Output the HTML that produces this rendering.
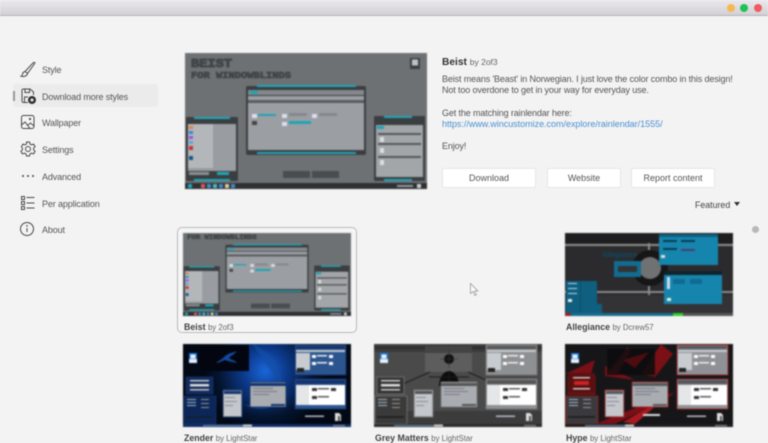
<!DOCTYPE html>
<html><head><meta charset="utf-8">
<style>
html,body{margin:0;padding:0;width:768px;height:443px;overflow:hidden;background:#f3f3f3}
#p{position:relative;width:768px;height:443px;overflow:hidden;background:#f3f3f3;font-family:"Liberation Sans",sans-serif;color:#444;filter:blur(.4px)}
.a{position:absolute;white-space:nowrap}
.nav{position:absolute;left:42px;font-size:9px;line-height:12px;color:#555;letter-spacing:-.13px;white-space:nowrap}
.ic{position:absolute;left:19px;width:18px;height:18px;fill:none;stroke:#4a4a4a;stroke-width:1}
.btn{position:absolute;top:168px;height:18px;background:#fff;border:1px solid #e6e6e6;border-radius:2px;text-align:center;font-size:9px;line-height:19px;color:#555}
.th{position:absolute;width:168px;height:83px;display:block;filter:blur(.55px)}
.lb{position:absolute;font-size:8.8px;line-height:12px;font-weight:bold;color:#444;white-space:nowrap}
.lb span{font-weight:normal;font-size:7.8px;color:#666}
</style></head><body><div id="p">
<svg width="0" height="0" style="position:absolute">
<defs>
<radialGradient id="zr" gradientUnits="userSpaceOnUse" cx="82" cy="27" r="62"><stop offset="0" stop-color="#1a66d8"/><stop offset=".35" stop-color="#0c3a8c"/><stop offset=".75" stop-color="#04142f"/><stop offset="1" stop-color="#020814"/></radialGradient>
</defs>
<symbol id="beist" viewBox="0 0 242 136">
<rect width="242" height="136" fill="#6e7174"/>
<text x="6" y="14" font-family="Liberation Mono" font-weight="bold" font-size="12" fill="#424547" stroke="#424547" stroke-width="1" textLength="41" lengthAdjust="spacingAndGlyphs">BEIST</text>
<text x="6" y="25" font-family="Liberation Mono" font-weight="bold" font-size="9" fill="#424547" stroke="#424547" stroke-width=".7" textLength="100" lengthAdjust="spacingAndGlyphs">FOR WINDOWBLINDS</text>
<rect x="225" y="5" width="10" height="11" fill="#3d4043"/><rect x="227" y="6.5" width="6" height="6" fill="#bfc2c5"/>
<rect x="61" y="33" width="120" height="69" rx="2" fill="#3b3e41"/>
<rect x="72" y="32" width="99" height="2" fill="#1fa5b5"/><rect x="72" y="99" width="99" height="2" fill="#1fa5b5"/>
<rect x="63" y="43" width="116" height="54" fill="#9b9fa3"/>
<rect x="63" y="37" width="116" height="5" fill="#85898d"/><rect x="63" y="47" width="116" height="3" fill="#5a5d60"/>
<rect x="65" y="38" width="8" height="3" fill="#1fa5b5"/>
<rect x="67" y="61" width="5" height="4" fill="#dde"/><rect x="73" y="61" width="18" height="2" fill="#1fa5b5"/><rect x="97" y="61" width="5" height="4" fill="#dde"/><rect x="104" y="60" width="18" height="3" fill="#85898d"/><rect x="127" y="61" width="5" height="4" fill="#dde"/><rect x="134" y="60" width="18" height="3" fill="#85898d"/>
<rect x="67" y="68" width="5" height="4" fill="#444"/><rect x="97" y="69" width="5" height="4" fill="#dde"/><rect x="104" y="68" width="22" height="3" fill="#1fa5b5"/>
<rect x="1" y="64" width="52" height="64" rx="1" fill="#3b3e41"/>
<rect x="9" y="64" width="36" height="2" fill="#1fa5b5"/><rect x="9" y="126" width="36" height="2" fill="#1fa5b5"/>
<rect x="3" y="71" width="25" height="44" fill="#b4b7ba"/><rect x="28" y="71" width="23" height="47" fill="#999da1"/><rect x="3" y="115" width="25" height="3" fill="#999da1"/>
<rect x="4" y="73" width="4" height="3" fill="#d84"/><rect x="4" y="78" width="4" height="3" fill="#38d"/><rect x="4" y="83" width="4" height="3" fill="#95d"/><rect x="4" y="88" width="4" height="3" fill="#5ad"/><rect x="4" y="93" width="4" height="4" fill="#c33"/><rect x="4" y="103" width="4" height="4" fill="#158"/>
<rect x="4" y="119" width="20" height="3" fill="#8c9094"/><rect x="32" y="119" width="12" height="3" fill="#1fa5b5"/>
<rect x="189" y="63" width="51" height="65" rx="1" fill="#3b3e41"/>
<rect x="199" y="63" width="28" height="2" fill="#1fa5b5"/><rect x="199" y="126" width="28" height="2" fill="#1fa5b5"/>
<rect x="191" y="72" width="47" height="52" fill="#a2a6a9"/><rect x="192" y="73" width="7" height="3" fill="#1fa5b5"/>
<rect x="193" y="80" width="43" height="2" fill="#55585b"/><rect x="193" y="90" width="43" height="2" fill="#55585b"/><rect x="193" y="103" width="43" height="2" fill="#55585b"/>
<rect x="195" y="84" width="4" height="5" fill="#ddd"/><rect x="195" y="95" width="4" height="5" fill="#ddd"/><rect x="195" y="107" width="4" height="5" fill="#ddd"/>
<rect x="98" y="118" width="27" height="7" fill="#4a4d4f"/><rect x="127" y="118" width="27" height="7" fill="#4a4d4f"/>
<rect y="130" width="242" height="6" fill="#2e3133"/>
<rect x="3" y="131" width="4" height="4" fill="#1fa5b5"/><rect x="16" y="131" width="4" height="4" fill="#d55"/><rect x="22" y="131" width="4" height="4" fill="#48c"/><rect x="28" y="131" width="4" height="4" fill="#4bb"/><rect x="34" y="131" width="4" height="4" fill="#48c"/><rect x="40" y="131" width="4" height="4" fill="#dc9"/><rect x="46" y="131" width="4" height="4" fill="#48c"/>
<rect x="212" y="132" width="16" height="2" fill="#99a"/><rect x="232" y="131" width="4" height="4" fill="#ccc"/>
</symbol>
<symbol id="ls" viewBox="0 0 168 83">
<rect x="1" y="52" width="32" height="28" fill="var(--sm)" stroke="var(--bd)" stroke-width=".8"/>
<rect x="3" y="72" width="27" height="2" fill="var(--ln)"/><rect x="4" y="55" width="9" height="1" fill="#abc"/><rect x="4" y="58" width="9" height="1" fill="#abc"/><rect x="4" y="61" width="9" height="1" fill="#abc"/>
<rect x="18" y="55" width="8" height="1" fill="#999"/><rect x="18" y="59" width="8" height="1" fill="#999"/><rect x="18" y="63" width="8" height="1" fill="#999"/>
<rect x="6" y="9" width="8" height="10" fill="#1a78d8"/><rect x="6" y="15" width="8" height="4" fill="#e8f0fa"/><rect x="7.5" y="10.5" width="5" height="4" fill="#e8f0fa"/>
<rect x="3" y="33" width="27" height="17" fill="var(--pn)" stroke="var(--bd)" stroke-width=".8"/>
<rect x="7" y="36" width="19" height="1.5" fill="#ccc"/><rect x="7" y="40" width="19" height="2.5" fill="#ddd"/><rect x="7" y="45" width="19" height="1.5" fill="#ccc"/>
<rect x="40" y="46" width="19" height="27" fill="#a8adb3" stroke="var(--bd)" stroke-width=".8"/><rect x="41" y="47" width="17" height="3" fill="var(--tt)"/><rect x="41" y="50" width="17" height="22" fill="#c4c7cb"/><rect x="42" y="53" width="10" height="1" fill="#889"/><rect x="42" y="57" width="12" height="1" fill="#889"/><rect x="42" y="61" width="8" height="1" fill="#889"/>
<rect x="67" y="38" width="36" height="25" fill="#a9adb1" stroke="var(--bd)" stroke-width=".8"/><rect x="67" y="39" width="36" height="3" fill="var(--tt)"/><rect x="70" y="44" width="20" height="1" fill="#778"/><rect x="70" y="47" width="24" height="1" fill="#778"/><rect x="70" y="50" width="16" height="1" fill="#778"/><rect x="88" y="60" width="14" height="2" fill="var(--tt)"/>
<rect x="112" y="1" width="51" height="30" fill="var(--w1)" stroke="var(--bd)" stroke-width=".8"/><rect x="113" y="2" width="49" height="3" fill="var(--tt)"/><rect x="113" y="6" width="49" height="2" fill="#c4c8cc"/>
<rect x="113" y="9" width="14" height="17" fill="#c8ccd0"/><rect x="129" y="11" width="4" height="3" fill="#fff"/><rect x="134" y="11" width="10" height="1.5" fill="#eee"/><rect x="146" y="11" width="4" height="3" fill="#fff"/><rect x="129" y="18" width="4" height="3" fill="#fff"/><rect x="134" y="18" width="10" height="1.5" fill="#eee"/><rect x="146" y="18" width="4" height="3" fill="#fff"/>
<rect x="114" y="24" width="7" height="4" fill="#222"/>
<rect x="112" y="35" width="51" height="30" fill="var(--w1)" stroke="var(--bd)" stroke-width=".8"/><rect x="113" y="36" width="49" height="4" fill="var(--tt)"/>
<rect x="113" y="41" width="49" height="20" fill="#fff"/><rect x="113" y="41" width="13" height="20" fill="#e4e6e8"/><rect x="129" y="44" width="5" height="3" fill="#333"/><rect x="135" y="44" width="11" height="1.5" fill="#555"/><rect x="148" y="44" width="5" height="3" fill="#333"/><rect x="129" y="52" width="5" height="3" fill="#333"/><rect x="135" y="52" width="11" height="1.5" fill="#555"/>
<rect x="122" y="71.5" width="19" height="1.5" fill="#bbc"/>
<path d="M152 69h4l2 2v6h-6z" fill="#ddd"/><rect x="155" y="72" width="2" height="5" fill="#555"/>
<rect y="80" width="168" height="3" fill="var(--tb)"/><rect x="20" y="81" width="40" height="1.2" fill="#68a"/><rect x="60" y="80.5" width="9" height="2" fill="#ccc"/><rect x="150" y="81" width="12" height="1.2" fill="#889"/>
</symbol>
</svg>

<div class="a" style="left:0;top:0;width:768px;height:15px;background:linear-gradient(#ebe9ec,#d2d0d5);border-bottom:1px solid #b5b3ba"></div>
<div class="a" style="left:727px;top:4px;width:8px;height:8px;border-radius:50%;background:#f6b94f"></div>
<div class="a" style="left:740px;top:4px;width:8px;height:8px;border-radius:50%;background:#1cc452"></div>
<div class="a" style="left:754px;top:4px;width:8px;height:8px;border-radius:50%;background:#ef5b60"></div>

<div class="a" style="left:13px;top:84px;width:145px;height:23px;background:#ebebeb;border-radius:3px"></div>
<div class="a" style="left:13px;top:91px;width:2px;height:10px;background:#999"></div>

<svg class="ic" style="top:60px" viewBox="0 0 18 18"><path d="M6 11.500 14.500 2.500c.8-.7 1.800.2 1.200 1L8.500 13.500zM6 11.500c-2 .5-2.500 2-2.500 3.200-.2 1-.8 1.300-1.500 1.500 2 .8 6 .3 6.500-2.700"/></svg>
<div class="nav" style="top:63.500px">Style</div>
<svg class="ic" style="top:87px" viewBox="0 0 18 18"><path d="M9 15.500H4.500a1.500 1.500 0 0 1-1.500-1.500V3.500A1.500 1.500 0 0 1 4.500 2h6.500l3.500 3v3M6 2v3.500h4.500V2M5.500 15v-5H9"/><circle cx="13" cy="13" r="4" fill="#333" stroke="none"/><circle cx="13" cy="13" r="1.500" fill="#eee" stroke="none"/></svg>
<div class="nav" style="top:90.500px">Download more styles</div>
<svg class="ic" style="top:113px" viewBox="0 0 18 18"><rect x="2.500" y="2.500" width="12.500" height="13" rx="2"/><path d="M2.500 12 6 9l5 6.500M9 12l2.500-2 3.500 3"/><circle cx="11" cy="6" r="1.100" fill="#444" stroke="none"/></svg>
<div class="nav" style="top:116.500px">Wallpaper</div>
<svg class="ic" style="top:140px" viewBox="0 0 18 18"><path d="M7.500 2h3l.5 2 1.600.8 2-.7 1.500 2.600-1.500 1.400v1.800l1.500 1.400-1.500 2.600-2-.7-1.600.8-.5 2h-3l-.5-2-1.600-.8-2 .7-1.500-2.600 1.500-1.400V8.100L2.400 6.700l1.500-2.600 2 .7L7.500 4z"/><circle cx="9" cy="9" r="2.500"/></svg>
<div class="nav" style="top:143.500px">Settings</div>
<svg class="ic" style="top:167px" viewBox="0 0 18 18"><circle cx="4" cy="9" r="1" fill="#444" stroke="none"/><circle cx="9" cy="9" r="1" fill="#444" stroke="none"/><circle cx="14" cy="9" r="1" fill="#444" stroke="none"/></svg>
<div class="nav" style="top:170.500px">Advanced</div>
<svg class="ic" style="top:194px" viewBox="0 0 18 18"><rect x="2.500" y="2.500" width="3" height="3"/><rect x="2.500" y="7.500" width="3" height="3"/><rect x="2.500" y="12.500" width="3" height="3"/><path d="M7.500 3.500h8M7.500 9h8M7.500 14h8"/></svg>
<div class="nav" style="top:197.500px">Per application</div>
<svg class="ic" style="top:220px" viewBox="0 0 18 18"><circle cx="8" cy="9" r="6.500"/><path d="M8 8v4"/><circle cx="8" cy="5.800" r=".8" fill="#444" stroke="none"/></svg>
<div class="nav" style="top:223.500px">About</div>

<svg class="a" style="left:185px;top:53px;filter:blur(.55px)" width="242" height="136"><use href="#beist" width="242" height="136"/></svg>

<div class="a" style="left:442px;top:56px;font-size:10.200px;line-height:13px;font-weight:bold;color:#333">Beist <span style="font-weight:normal;font-size:8.500px;color:#666">by 2of3</span></div>
<div class="a" style="left:442px;top:74px;font-size:9px;line-height:11.200px;color:#555;letter-spacing:-.13px">Beist means 'Beast' in Norwegian. I just love the color combo in this design!<br>Not too overdone to get in your way for everyday use.<br><br>Get the matching rainlendar here:<br><span style="color:#4a90d0;letter-spacing:-.02px">https://www.wincustomize.com/explore/rainlendar/1555/</span><br><br>Enjoy!</div>

<div class="btn" style="left:442px;width:92px">Download</div>
<div class="btn" style="left:547px;width:72px">Website</div>
<div class="btn" style="left:631px;width:82px">Report content</div>

<div class="a" style="left:695px;top:199px;font-size:8.800px;line-height:12px;color:#444">Featured</div>
<div class="a" style="left:734px;top:202px;width:0;height:0;border-left:3.500px solid transparent;border-right:3.500px solid transparent;border-top:4px solid #333"></div>
<div class="a" style="left:752px;top:226px;width:7px;height:7px;border-radius:50%;background:#b8b8b8"></div>

<div class="a" style="left:177px;top:227px;width:178px;height:104px;border:1.500px solid #bbb;border-radius:5px;background:#f5f5f5"></div>
<svg class="th" style="left:183px;top:233px" viewBox="0 0 242 120" preserveAspectRatio="none"><svg x="0" y="-16" width="242" height="136" viewBox="0 0 242 136"><use href="#beist" width="242" height="136"/></svg></svg>
<div class="lb" style="left:184px;top:321px">Beist <span>by 2of3</span></div>

<svg class="th" style="left:565px;top:233px" viewBox="0 0 168 83">
<rect width="168" height="83" fill="#2b2b2d"/><rect y="0" width="168" height="10" fill="#1e1e20"/>
<rect y="11" width="168" height="2" fill="#8a8a8a"/><rect y="58" width="168" height="2" fill="#8a8a8a"/><rect y="62" width="168" height="18" fill="#333336"/>
<rect x="83" y="10" width="2" height="52" fill="#8a8a8a"/>
<circle cx="85" cy="35" r="18" fill="#161616"/><circle cx="85" cy="35" r="11" fill="#6f7173"/>
<text x="37" y="24" font-family="Liberation Sans" font-weight="bold" font-size="7" fill="#0d4a66">Allegiance</text>
<rect x="49" y="28" width="27" height="16" fill="#126c92"/><rect x="53" y="33" width="19" height="6" fill="#333"/>
<rect x="94" y="1" width="59" height="31" fill="#1685ad"/><rect x="94" y="1" width="59" height="3" fill="#0e5f80"/><rect x="98" y="7" width="14" height="2" fill="#0a3b52"/><rect x="116" y="7" width="14" height="2" fill="#0a3b52"/><rect x="98" y="15" width="14" height="2" fill="#0a3b52"/><rect x="116" y="16" width="14" height="2" fill="#4a3b72"/><rect x="96" y="22" width="4" height="3" fill="#ddd"/>
<rect x="99" y="38" width="58" height="33" fill="#1685ad"/><rect x="99" y="38" width="58" height="4" fill="#10242e"/><rect x="102" y="44" width="3" height="12" fill="#cde"/><rect x="108" y="46" width="12" height="5" fill="#0f6c90"/><rect x="125" y="46" width="12" height="5" fill="#0f6c90"/><rect x="102" y="65" width="4" height="3" fill="#eed"/>
<rect x="1" y="48" width="31" height="32" fill="#0f5f80"/><rect x="15" y="48" width="1" height="32" fill="#0b506d"/><rect x="3" y="50" width="9" height="1" fill="#bde"/><rect x="3" y="55" width="9" height="1" fill="#bde"/><rect x="3" y="60" width="9" height="1" fill="#bde"/><rect x="3" y="66" width="4" height="3" fill="#eed"/>
<rect x="28" y="71" width="9" height="9" fill="#0f5f80"/>
<rect y="80" width="168" height="3" fill="#166c8e"/><rect x="0" y="80" width="6" height="3" fill="#922"/><rect x="108" y="80" width="10" height="3" fill="#3c3"/><rect x="118" y="80" width="50" height="3" fill="#555"/>
</svg>
<div class="lb" style="left:566px;top:321px">Allegiance <span>by Dcrew57</span></div>

<svg class="th" style="left:183px;top:344px;--sm:#0c2658;--bd:#143268;--ln:#123;--pn:#122b5e;--tt:#16346f;--w1:#2c558f;--tb:#0e2d63" viewBox="0 0 168 83">
<rect width="168" height="83" fill="url(#zr)"/>
<rect x="18" y="1" width="48" height="26" fill="#030610"/>
<path d="M40 14c6-6 10-5 14-7-3 4-7 5-8 7 2 2 6 2 8 5-5-1-9-2-12-3-3 1-6 3-9 3 2-2 5-3 7-5z" fill="#124a9e"/>
<path d="M70 0c20 10 30 22 28 40C90 28 80 18 70 0zM60 60c15 4 30 0 45-10-8 14-28 20-45 10z" fill="#144fa8" opacity=".6"/>
<use href="#ls" width="168" height="83"/>
</svg>
<div class="lb" style="left:184px;top:432px">Zender <span>by LightStar</span></div>

<svg class="th" style="left:374px;top:344px;--sm:#3a3a3a;--bd:#777;--ln:#222;--pn:#333;--tt:#555;--w1:#8e9093;--tb:#2c2c2c" viewBox="0 0 168 83">
<rect width="168" height="83" fill="#4a4a4a"/><rect width="168" height="8" fill="#3a3a3a"/><rect y="3" width="168" height="1.500" fill="#2a2a2a"/>
<path d="M51 2h47v26H51z" fill="#5d5d5d"/><rect x="51" y="2" width="47" height="7" fill="#444"/><circle cx="75" cy="15" r="5" fill="#111"/><path d="M75 6v18M66 15h18" stroke="#333" stroke-width=".6"/>
<path d="M65 42c0-10 6-15 10-15s10 5 10 15z" fill="#0c0c0c"/><path d="M55 33h40M75 27v15M20 44l36-16M130 44l-36-16" stroke="#1b1b1b" stroke-width="1"/>
<rect y="67" width="168" height="13" fill="#3c3c3c"/>
<use href="#ls" width="168" height="83"/>
</svg>
<div class="lb" style="left:375px;top:432px">Grey Matters <span>by LightStar</span></div>

<svg class="th" style="left:565px;top:344px;--sm:#3a3a3e;--bd:#a01818;--ln:#222;--pn:#5a1010;--tt:#55585c;--w1:#8e9196;--tb:#1d1d1f" viewBox="0 0 168 83">
<rect width="168" height="83" fill="#161618"/>
<path d="M96 0 108 10 90 33 76 30zM30 80 110 48 100 56 50 80zM0 30l30-14-4 14zM40 22l30 14-30-4z" fill="#7a1016"/>
<path d="M42 30 62 4l4 3-14 24zM58 78l42-24-30 26z" fill="#a81a20"/>
<rect x="42" y="5" width="48" height="26" fill="#0c0c0e" opacity=".88"/><path d="M58 16 84 8 70 24z" fill="#4c0c10"/>
<use href="#ls" width="168" height="83"/>
<rect x="3" y="29" width="27" height="20" fill="#5a1010"/><rect x="8" y="33" width="17" height="1.500" fill="#ccc"/><rect x="9" y="37" width="15" height="4" fill="#c22"/><rect x="8" y="44" width="17" height="1.500" fill="#ccc"/>
<rect x="78" y="70" width="17" height="2" fill="#ddd"/>
</svg>
<div class="lb" style="left:566px;top:432px">Hype <span>by LightStar</span></div>

<svg class="a" style="left:469px;top:282px" width="12" height="16" viewBox="0 0 12 16"><path d="M1.500 1.500v10l2.500-2 1.700 4 1.600-.7-1.700-3.800h3.200z" fill="#fafafa" stroke="#9a9a9a" stroke-width=".8"/></svg>
</div></body></html>
